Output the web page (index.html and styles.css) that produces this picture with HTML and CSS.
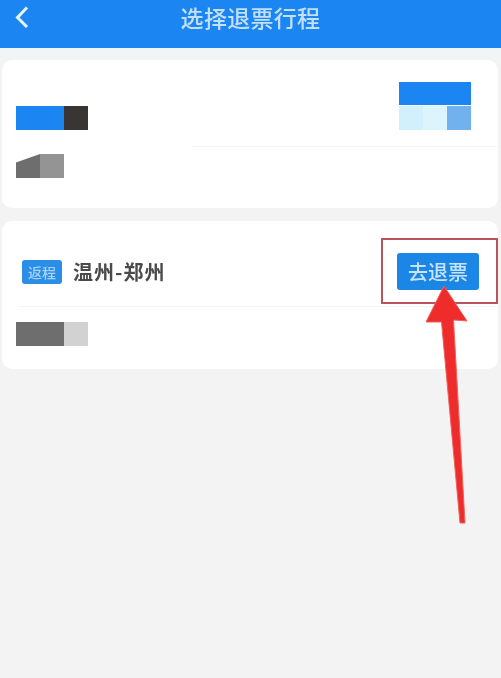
FILE: index.html
```html
<!DOCTYPE html>
<html lang="zh">
<head>
<meta charset="utf-8">
<title>选择退票行程</title>
<link rel="stylesheet" href="styles.css">
</head>
<body>
<div class="page">
  <header class="topbar">
    <svg class="back" width="16" height="24" viewBox="0 0 16 24" aria-hidden="true"><path d="M13 2.5 3.5 12.5 13 22" fill="none" stroke="#e8f3fd" stroke-width="3"/></svg>
    <h1 class="title">选择退票行程</h1>
  </header>
  <main class="list">
    <section class="card">
      <div class="row row-first">
        <div class="mosaic">
          <i class="m-blue"></i><i class="m-blue"></i><i class="m-dark"></i>
        </div>
        <div class="mosaic mosaic-action">
          <i class="m-blue"></i><i class="m-blue"></i><i class="m-blue"></i>
          <i class="m-pale"></i><i class="m-paler"></i><i class="m-sky"></i>
        </div>
      </div>
      <div class="divider divider-short"></div>
      <div class="detail detail-first">
        <div class="mosaic">
          <i class="m-grey m-slant"></i><i class="m-midgrey"></i>
        </div>
      </div>
    </section>
    <section class="card card-return">
      <div class="row row-return">
        <div class="route">
          <span class="tag">返程</span>
          <span class="cities">温州-郑州</span>
        </div>
        <button class="refund" type="button">去退票</button>
      </div>
      <div class="divider"></div>
      <div class="detail detail-return">
        <div class="mosaic">
          <i class="m-grey"></i><i class="m-grey"></i><i class="m-light"></i>
        </div>
      </div>
    </section>
  </main>
  <div class="highlight"></div>
  <svg class="arrow" width="501" height="678" viewBox="0 0 501 678" aria-hidden="true">
    <path d="M444 286 467 321 453.500 320 465 523 460 523 441.500 322 426 322Z" fill="#ee2c2c" stroke="#f0605c" stroke-width="1"/>
  </svg>
</div>
</body>
</html>
```

FILE: styles.css
```css
* { box-sizing: border-box; }

html, body {
  margin: 0;
  padding: 0;
}

body {
  background: #f3f3f3;
  font-family: "Noto Sans CJK SC", "Noto Sans", sans-serif;
}

.page {
  position: relative;
  width: 501px;
  height: 678px;
  overflow: hidden;
  background: linear-gradient(#eef6f9 48px, #f3f3f3 62px);
  filter: blur(0.6px);
}

.topbar {
  position: relative;
  display: flex;
  align-items: center;
  justify-content: center;
  height: 48px;
  padding-bottom: 14px;
  background: #1b86f2;
}

.back {
  position: absolute;
  left: 14px;
  top: 5px;
}

.title {
  margin: 0;
  font-size: 23px;
  line-height: 30px;
  letter-spacing: 0.3px;
  font-weight: 500;
  color: #c4e0f8;
}

.list {
  display: flex;
  flex-direction: column;
  gap: 13px;
  padding: 12px 3px 0 2px;
}

.card {
  height: 148px;
  background: #fff;
  border-radius: 10px;
}

.row {
  display: flex;
  justify-content: space-between;
  padding-left: 14px;
}

.row-first {
  align-items: flex-end;
  height: 86px;
  padding-right: 27px;
  padding-bottom: 16px;
}

.row-return {
  align-items: center;
  height: 85px;
  padding: 32px 19px 16px 20px;
}

.divider {
  height: 1px;
  margin-left: 16px;
  background: #f4f4f4;
}

.divider-short {
  margin-left: 190px;
}

.detail {
  padding-left: 14px;
}

.detail-first {
  padding-top: 7px;
}

.detail-return {
  padding-top: 15px;
}

.mosaic {
  display: grid;
  grid-template-columns: repeat(auto-fill, 24px);
  grid-auto-rows: 24px;
  width: 72px;
}

.mosaic-action i:nth-child(-n+3) {
  height: 23px;
}

.m-blue { background: #1b86f2; }
.m-dark { background: #3a3535; }
.m-pale { background: #d2f0fb; }
.m-paler { background: #dcf5fd; }
.m-sky { background: #71b2ee; }
.m-grey { background: #6e6e6e; }
.m-midgrey { background: #949494; }
.m-light { background: #d2d2d2; }
.m-slant { clip-path: polygon(0 35%, 100% 0, 100% 100%, 0 100%); }

.route {
  display: flex;
  align-items: center;
  gap: 11px;
}

.tag {
  display: flex;
  align-items: center;
  justify-content: center;
  width: 40px;
  height: 24px;
  border-radius: 3px;
  background: #2a8de6;
  color: #a9d4f5;
  font-size: 14px;
  font-weight: 500;
  line-height: 24px;
}

.cities {
  font-size: 20px;
  line-height: 28px;
  letter-spacing: 1px;
  font-weight: 700;
  color: #4a4a4a;
}

.refund {
  width: 82px;
  height: 37px;
  padding: 0;
  border: 0;
  border-radius: 3px;
  background: #1b86e6;
  color: #c8e4fa;
  font: 500 20px/37px "Noto Sans CJK SC", "Noto Sans", sans-serif;
}

.highlight {
  position: absolute;
  left: 381px;
  top: 238px;
  width: 117px;
  height: 66px;
  border: 2px solid #b9545c;
}

.arrow {
  position: absolute;
  left: 0;
  top: 0;
  pointer-events: none;
}
```
